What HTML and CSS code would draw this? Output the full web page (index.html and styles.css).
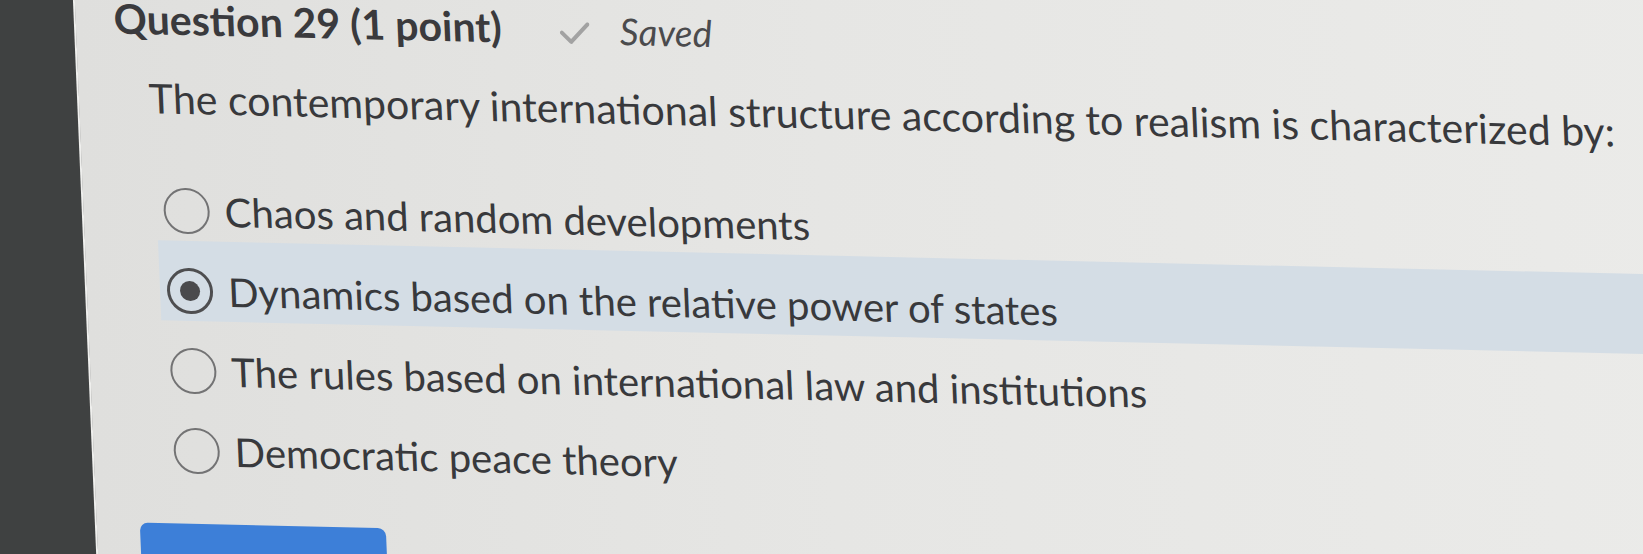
FILE: index.html
```html
<!DOCTYPE html>
<html lang="en">
<head>
    <meta charset="UTF-8">
    <meta name="viewport" content="width=device-width, initial-scale=1.0">
    <title>Quiz - Question 29</title>
    <link rel="stylesheet" href="styles.css">
</head>
<body>
    <div class="screen">
        <aside class="sidebar"></aside>

        <main class="content">
            <div class="question-head">
                <h2 class="question-title">Question 29 (1 point)</h2>
                <span class="save-state">
                    <svg class="check" viewBox="0 0 30 22" aria-hidden="true">
                        <polyline points="2,11 11,20 28,2"></polyline>
                    </svg>
                    <em>Saved</em>
                </span>
            </div>

            <p class="question-text">The contemporary international structure according to realism is characterized by:</p>

            <ul class="options">
                <li class="option">
                    <span class="radio"></span>
                    <span class="option-label">Chaos and random developments</span>
                </li>
                <li class="option selected">
                    <span class="radio"></span>
                    <span class="option-label">Dynamics based on the relative power of states</span>
                </li>
                <li class="option">
                    <span class="radio"></span>
                    <span class="option-label">The rules based on international law and institutions</span>
                </li>
                <li class="option">
                    <span class="radio"></span>
                    <span class="option-label">Democratic peace theory</span>
                </li>
            </ul>

            <button class="next-btn" type="button">Next Page</button>
        </main>
    </div>
</body>
</html>
```

FILE: styles.css
```css
* {
    margin: 0;
    padding: 0;
    box-sizing: border-box;
}

html, body {
    height: 100%;
}

body {
    font-family: Lato, "Open Sans", sans-serif;
    background: #e4e4e2;
    overflow: hidden;
}

/* the whole screen sits a little tilted, so it is drawn larger than the window */
.screen {
    display: flex;
    width: 1760px;
    height: 700px;
    margin: -60px 0 0 -40px;
    transform: skew(2.4deg, 1.3deg);
    transform-origin: 40px 60px;
}

.sidebar {
    flex-shrink: 0;
    width: 115px;
    background: #3f4141;
    border-right: 2px solid #efefed;
}

.content {
    flex: 1;
    padding: 60px 0 0 38px;
    background: linear-gradient(90deg, #dfdfdd 0%, #e6e6e4 45%, #ebebe9 100%);
    color: #38393c;
}

.question-head {
    display: flex;
    align-items: baseline;
    margin-top: -5px;
}

.question-title {
    font-size: 41px;
    font-weight: 700;
    line-height: 1;
    color: #3a3a3d;
}

.save-state {
    display: flex;
    align-items: baseline;
    gap: 30px;
    margin-left: 58px;
    line-height: 1;
}

.check {
    width: 30px;
    height: 22px;
    margin-bottom: 2px;
}

.check polyline {
    fill: none;
    stroke: #a2a2a2;
    stroke-width: 4;
    stroke-linecap: round;
    stroke-linejoin: round;
}

.save-state em {
    font-size: 37px;
    font-style: italic;
    color: #4b4b4d;
}

.question-text {
    margin: 34px 0 0 32px;
    font-size: 41px;
    line-height: 1.2;
    white-space: nowrap;
}

.options {
    list-style: none;
    margin: 38px 0 0 35px;
}

.option {
    display: flex;
    align-items: center;
    gap: 15px;
    height: 80px;
    padding: 20px 0 0 7px;
}

.option.selected {
    background: #d4dde5;
}

.radio {
    flex-shrink: 0;
    position: relative;
    width: 46px;
    height: 46px;
    border: 2px solid #737374;
    border-radius: 50%;
}

.option.selected .radio {
    border: 3px solid #4e4e50;
}

/* filled dot of the chosen answer */
.option.selected .radio::after {
    content: "";
    position: absolute;
    top: 50%;
    left: 50%;
    width: 20px;
    height: 20px;
    margin: -10px 0 0 -10px;
    border-radius: 50%;
    background: #4a4a4c;
}

.option-label {
    font-size: 40px;
    white-space: nowrap;
}

.next-btn {
    display: block;
    width: 246px;
    height: 80px;
    margin: 43px 0 0 5px;
    padding-top: 34px;
    border: none;
    border-radius: 8px 8px 0 0;
    background: #3d7fd8;
    color: #ffffff;
    font-family: Lato, sans-serif;
    font-size: 30px;
    font-weight: 700;
}
```
